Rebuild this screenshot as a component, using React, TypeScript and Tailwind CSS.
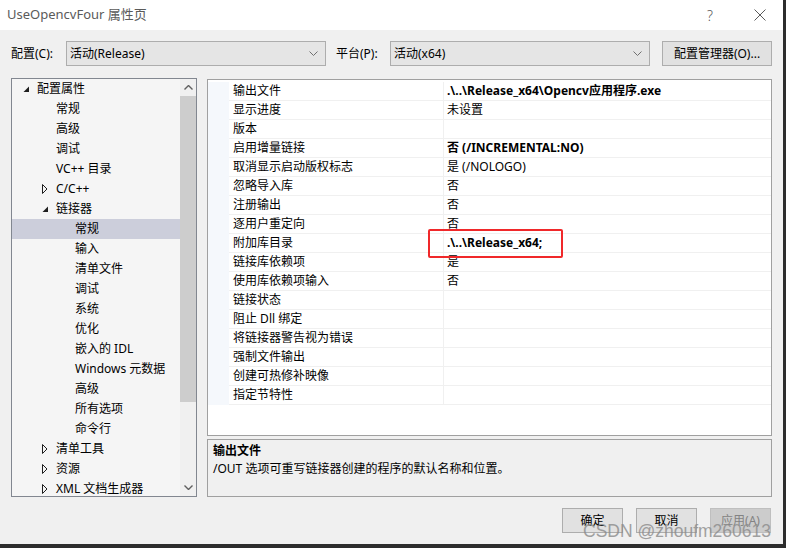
import React from "react";

type TreeNode = {
  label: string;
  level: 0 | 1 | 2;
  arrow?: "open" | "closed";
  selected?: boolean;
};

const treeNodes: TreeNode[] = [
  { label: "配置属性", level: 0, arrow: "open" },
  { label: "常规", level: 1 },
  { label: "高级", level: 1 },
  { label: "调试", level: 1 },
  { label: "VC++ 目录", level: 1 },
  { label: "C/C++", level: 1, arrow: "closed" },
  { label: "链接器", level: 1, arrow: "open" },
  { label: "常规", level: 2, selected: true },
  { label: "输入", level: 2 },
  { label: "清单文件", level: 2 },
  { label: "调试", level: 2 },
  { label: "系统", level: 2 },
  { label: "优化", level: 2 },
  { label: "嵌入的 IDL", level: 2 },
  { label: "Windows 元数据", level: 2 },
  { label: "高级", level: 2 },
  { label: "所有选项", level: 2 },
  { label: "命令行", level: 2 },
  { label: "清单工具", level: 1, arrow: "closed" },
  { label: "资源", level: 1, arrow: "closed" },
  { label: "XML 文档生成器", level: 1, arrow: "closed" },
];

type Prop = { name: string; value?: string; bold?: boolean };

const props: Prop[] = [
  { name: "输出文件", value: ".\\..\\Release_x64\\Opencv应用程序.exe", bold: true },
  { name: "显示进度", value: "未设置" },
  { name: "版本" },
  { name: "启用增量链接", value: "否 (/INCREMENTAL:NO)", bold: true },
  { name: "取消显示启动版权标志", value: "是 (/NOLOGO)" },
  { name: "忽略导入库", value: "否" },
  { name: "注册输出", value: "否" },
  { name: "逐用户重定向", value: "否" },
  { name: "附加库目录", value: ".\\..\\Release_x64;", bold: true },
  { name: "链接库依赖项", value: "是" },
  { name: "使用库依赖项输入", value: "否" },
  { name: "链接状态" },
  { name: "阻止 Dll 绑定" },
  { name: "将链接器警告视为错误" },
  { name: "强制文件输出" },
  { name: "创建可热修补映像" },
  { name: "指定节特性" },
];

const indent = {
  0: "w-[11px]",
  1: "w-[30px]",
  2: "w-[49px]",
};

function OpenArrow() {
  return (
    <svg width="7" height="7" viewBox="0 0 7 7">
      <path d="M6 0.5 L6 6 L0.5 6 Z" fill="#1e1e1e" />
    </svg>
  );
}

function ClosedArrow() {
  return (
    <svg width="6" height="10" viewBox="0 0 6 10">
      <path d="M0.5 0.5 L5 5 L0.5 9.5 Z" fill="none" stroke="#1e1e1e" strokeWidth="1" />
    </svg>
  );
}

function Chevron({ up }: { up?: boolean }) {
  return (
    <svg width="9" height="5" viewBox="0 0 9 5">
      <path
        d={up ? "M0.5 4.5 L4.5 0.5 L8.5 4.5" : "M0.5 0.5 L4.5 4.5 L8.5 0.5"}
        fill="none"
        stroke="#606060"
        strokeWidth="1.4"
      />
    </svg>
  );
}

function Combo({ text }: { text: string }) {
  return (
    <div className="flex h-[25px] w-[260px] items-center border border-[#adadad] bg-[#e5e5e5] pl-[3px] pr-[7px]">
      <span className="flex-1">{text}</span>
      <svg width="9" height="5" viewBox="0 0 9 5">
        <path d="M0.5 0.5 L4.5 4.5 L8.5 0.5" fill="none" stroke="#707070" strokeWidth="1" />
      </svg>
    </div>
  );
}

function Button({ label, disabled }: { label: string; disabled?: boolean }) {
  return (
    <div
      className={
        disabled
          ? "flex h-[25px] w-[61px] items-center justify-center border border-[#bfbfbf] bg-[#cccccc] text-[#838383]"
          : "flex h-[25px] w-[61px] items-center justify-center border border-[#adadad] bg-[#e1e1e1]"
      }
    >
      {label}
    </div>
  );
}

export default function App() {
  return (
    <div className="h-[548px] w-[786px] bg-[#2d2d2d] text-[12px] text-black font-['Noto_Sans','Noto_Sans_CJK_SC',sans-serif]">
      <div className="relative flex h-[544px] w-[783px] flex-col bg-[#f0f0f0]">
        {/* title bar */}
        <div className="flex h-[30px] items-center bg-white pl-[7px] pr-[17px] text-[13px] text-[#5a5a5a]">
          <span className="flex-1">UseOpencvFour 属性页</span>
          <span className="mr-[41px] text-[14px] font-light">?</span>
          <svg width="12" height="12" viewBox="0 0 12 12">
            <path d="M0.5 0.5 L11.5 11.5 M11.5 0.5 L0.5 11.5" stroke="#5a5a5a" strokeWidth="1" />
          </svg>
        </div>

        {/* configuration / platform row */}
        <div className="mt-[11px] flex items-center px-[11px]">
          <span className="w-[55px]">配置(C):</span>
          <Combo text="活动(Release)" />
          <span className="ml-[10px] w-[54px]">平台(P):</span>
          <Combo text="活动(x64)" />
          <div className="ml-[12px] flex h-[25px] w-[110px] items-center justify-center border border-[#adadad] bg-[#e1e1e1]">
            配置管理器(O)...
          </div>
        </div>

        <div className="mt-[12px] flex px-[11px]">
          {/* category tree */}
          <div className="flex h-[419px] w-[186px] border border-[#828790] bg-[#f5f5f5]">
            <div className="flex-1 overflow-hidden">
              {treeNodes.map((n, i) => (
                <div
                  key={i}
                  className={
                    n.selected
                      ? "flex h-[20px] items-center whitespace-nowrap bg-[#cccedb]"
                      : "flex h-[20px] items-center whitespace-nowrap"
                  }
                >
                  <span className={indent[n.level]} />
                  <span className="flex w-[14px] items-center">
                    {n.arrow === "open" && <OpenArrow />}
                    {n.arrow === "closed" && <ClosedArrow />}
                  </span>
                  <span>{n.label}</span>
                </div>
              ))}
            </div>
            <div className="flex w-[16px] flex-col items-center bg-[#f0f0f0]">
              <div className="flex h-[17px] items-center">
                <Chevron up />
              </div>
              <div className="h-[306px] w-full bg-[#cdcdcd]" />
              <div className="flex-1" />
              <div className="flex h-[17px] items-center">
                <Chevron />
              </div>
            </div>
          </div>

          <div className="ml-[10px] flex w-[565px] flex-col">
            {/* property grid */}
            <div className="relative mt-[1px] flex h-[357px] flex-col border border-[#a0a0a0] bg-white pt-[2px]">
              {props.map((p, i) => (
                <div key={i} className="flex h-[19px]">
                  <div className="w-[21px] bg-[#f5f8fc]" />
                  <div className="flex w-[215px] items-center border-r border-b border-[#f0f0f0] pl-[4px] whitespace-nowrap">
                    {p.name}
                  </div>
                  <div
                    className={
                      p.bold
                        ? "flex flex-1 items-center border-b border-[#f0f0f0] pl-[3px] font-bold whitespace-nowrap"
                        : "flex flex-1 items-center border-b border-[#f0f0f0] pl-[3px] whitespace-nowrap"
                    }
                  >
                    {p.value}
                  </div>
                </div>
              ))}
              <div className="pointer-events-none absolute left-[220px] top-[149px] h-[29px] w-[135px] rounded-[2px] border-2 border-[#f0282a]" />
            </div>

            {/* description */}
            <div className="mt-[3px] h-[58px] border border-[#a0a0a0] bg-[#f0f0f0] px-[5px] pt-[2px]">
              <div className="font-bold leading-[18px]">输出文件</div>
              <div className="leading-[18px]">/OUT 选项可重写链接器创建的程序的默认名称和位置。</div>
            </div>
          </div>
        </div>

        {/* dialog buttons */}
        <div className="mt-[11px] flex justify-end gap-[13px] pr-[12px]">
          <Button label="确定" />
          <Button label="取消" />
          <Button label="应用(A)" disabled />
        </div>

        <div className="pointer-events-none absolute left-[583px] top-[520px] text-[17.5px] leading-[22px] text-[#8c8c8c] opacity-80 font-['Liberation_Sans',sans-serif]">
          CSDN @zhoufm260613
        </div>
      </div>
    </div>
  );
}
